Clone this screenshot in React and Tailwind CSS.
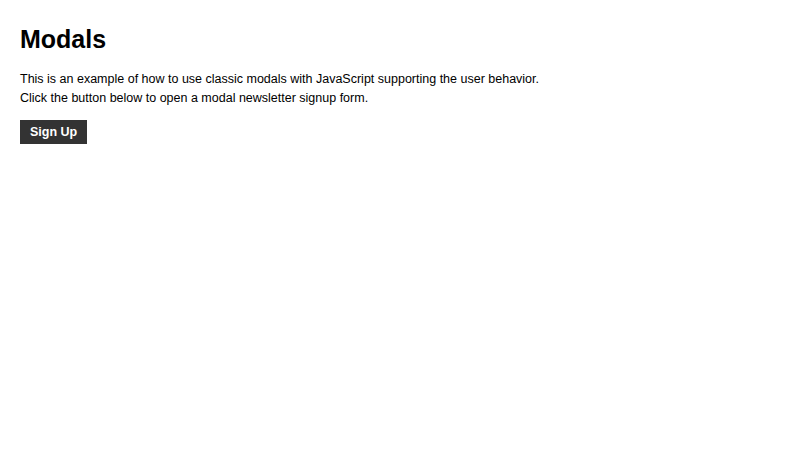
export default function App() {
  return (
    <div
      className="min-h-[450px] bg-white px-5 pt-6 text-black"
      style={{ fontFamily: '"Liberation Sans", Arial, sans-serif' }}
    >
      <h1 className="text-[25px] font-bold leading-[30px]">Modals</h1>
      <p className="mt-4 text-[12.5px] leading-[19px]">
        This is an example of how to use classic modals with JavaScript supporting the user behavior.
        <br />
        Click the button below to open a modal newsletter signup form.
      </p>
      <button className="mt-3 flex h-6 items-center bg-[#333333] px-[10px] text-[12.5px] font-bold text-white">
        Sign Up
      </button>
    </div>
  );
}
